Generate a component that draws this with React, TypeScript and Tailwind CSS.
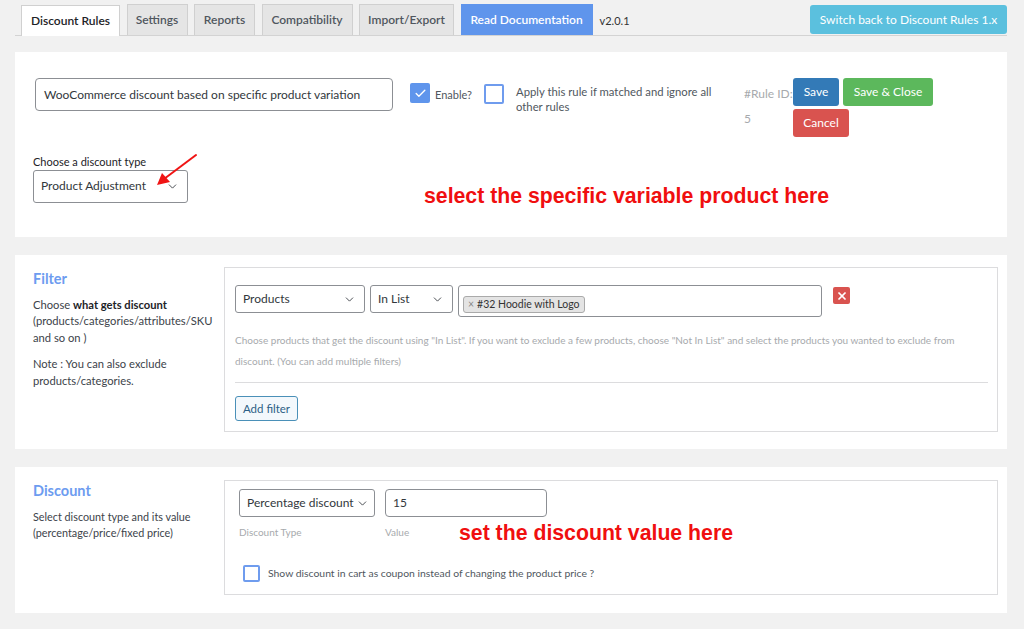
import { ChevronDown, Check, X } from 'lucide-react'

const TABS = [
  { label: 'Discount Rules', w: 'w-[99px]' },
  { label: 'Settings', w: 'w-[61px]' },
  { label: 'Reports', w: 'w-[61px]' },
  { label: 'Compatibility', w: 'w-[91px]' },
  { label: 'Import/Export', w: 'w-[95px]' },
]

function Select({ label, w }: { label: string; w: string }) {
  return (
    <div className={`${w} h-[29px] border border-[#8c8f94] rounded-[3px] bg-white flex items-center justify-between pl-[7px] pr-[8px] text-[12px] text-[#32373c] whitespace-nowrap`}>
      <span>{label}</span>
      <ChevronDown size={13} strokeWidth={1.6} className="shrink-0" />
    </div>
  )
}

export default function App() {
  return (
    <div className="min-h-screen bg-[#f1f1f1] font-['Lato',sans-serif] text-[#3c434a]">
      <div className="mx-[15px] w-[992px] pt-[5px]">
        {/* Tabs */}
        <div className="flex items-end border-b border-[#d3d3d3] pl-[6px] h-[31px]">
          {TABS.map((t, i) => (
            <div
              key={t.label}
              className={`${t.w} h-[31px] mr-[6.5px] flex items-center justify-center border border-b-0 border-[#d0d0d0] text-[12px] font-semibold ${
                i === 0 ? 'bg-white text-[#1d2327] -mb-px' : 'bg-[#e5e5e5] text-[#50575e]'
              }`}
            >
              {t.label}
            </div>
          ))}
          <div className="w-[132px] h-[31px] flex items-center justify-center bg-[#5f95ec] text-white text-[12px] font-semibold">
            Read Documentation
          </div>
          <span className="ml-[7px] mb-[6px] text-[11px] text-[#333]">v2.0.1</span>
          <button className="ml-auto mb-[1px] w-[197px] h-[29px] rounded-[3px] bg-[#5bc0de] text-white text-[12px]">
            Switch back to Discount Rules 1.x
          </button>
        </div>

        {/* Rule header panel */}
        <div className="mt-[16px] bg-white h-[185px] pl-[20px] pt-[26px] relative">
          <div className="flex items-start">
            <div className="w-[358px] h-[33px] border border-[#8c8f94] rounded-[4px] flex items-center px-[8px] text-[12px] text-[#32373c] whitespace-nowrap">
              WooCommerce discount based on specific product variation
            </div>
            <div className="ml-[17px] mt-[5px] w-[20px] h-[20px] rounded-[2px] bg-[#5f95ec] flex items-center justify-center">
              <Check size={13} strokeWidth={2.5} className="text-white" />
            </div>
            <span className="ml-[5px] mt-[9px] w-[49px] text-[11px] text-[#50575e]">Enable?</span>
            <div className="mt-[6px] w-[20px] h-[20px] rounded-[2px] border-2 border-[#6f9cee] bg-white" />
            <span className="ml-[12px] mt-[6px] w-[200px] text-[11.3px] leading-[15px] text-[#50575e]">
              Apply this rule if matched and ignore all other rules
            </span>
            <div className="ml-[28px] mt-[3px] w-[49px] text-[12px] text-[#a7aaad] leading-[25px] whitespace-nowrap">
              <div>#Rule ID:</div>
              <div>5</div>
            </div>
            <div className="flex flex-col gap-[3px]">
              <div className="flex gap-[4px]">
                <button className="w-[46px] h-[28px] rounded-[3px] bg-[#337ab7] text-white text-[12px]">Save</button>
                <button className="w-[90px] h-[28px] rounded-[3px] bg-[#5cb85c] text-white text-[12px]">Save &amp; Close</button>
              </div>
              <button className="w-[56px] h-[28px] rounded-[3px] bg-[#d9534f] text-white text-[12px]">Cancel</button>
            </div>
          </div>

          <div className="mt-[17px] -ml-[2px] text-[11px] text-[#1d2327]">Choose a discount type</div>
          <div className="flex items-start -ml-[2px] -mt-[1px]">
            <Select label="Product Adjustment" w="w-[155px] !h-[33px]" />
            <span className="ml-[236px] mt-[14px] font-['Liberation_Sans',sans-serif] font-bold text-[21.25px] leading-[24px] text-[#f00f0f] whitespace-nowrap">
              select the specific variable product here
            </span>
          </div>

          <svg className="absolute left-[135px] top-[100px]" width="52" height="40" viewBox="0 0 52 40">
            <line x1="46" y1="3" x2="14" y2="27" stroke="#f01414" strokeWidth="2" strokeLinecap="round" />
            <polygon points="7,33 12,21 20,30" fill="#f01414" />
          </svg>
        </div>

        {/* Filter panel */}
        <div className="mt-[18px] bg-white h-[194px] flex pl-[18px] pt-[12px] pr-[9px]">
          <div className="w-[191px] pt-[4px] text-[11.2px] leading-[16.5px] text-[#3c434a]">
            <div className="text-[14.5px] font-bold text-[#6d9cf0] mb-[9px]">Filter</div>
            <p>
              Choose <span className="font-bold text-[#1d2327]">what gets discount</span> (products/categories/attributes/SKU and so on )
            </p>
            <p className="mt-[10px]">Note : You can also exclude products/categories.</p>
          </div>
          <div className="flex-1 h-[165px] border border-[#dcdcde] pl-[10px] pr-[8px] pt-[17px]">
            <div className="flex items-start">
              <Select label="Products" w="w-[130px] !h-[28px]" />
              <div className="ml-[5px]">
                <Select label="In List" w="w-[83px] !h-[28px]" />
              </div>
              <div className="ml-[5px] w-[364px] h-[32px] border border-[#8c8f94] rounded-[3px] pl-[4px] pt-[4px]">
                <span className="inline-flex items-center h-[17px] px-[4px] border border-[#aaa] rounded-[3px] bg-[#e4e4e4] text-[10.5px] text-[#333]">
                  <span className="text-[#888] mr-[3px]">×</span>#32 Hoodie with Logo
                </span>
              </div>
              <div className="ml-[11px] mt-[2px] w-[17px] h-[17px] rounded-[2px] bg-[#d9534f] flex items-center justify-center">
                <X size={12} strokeWidth={3.5} className="text-white" />
              </div>
            </div>
            <p className="mt-[13px] text-[10px] leading-[21px] text-[#a7aaad] pr-[8px]">
              Choose products that get the discount using "In List". If you want to exclude a few products, choose "Not In List" and select the products you wanted to exclude from discount. (You can add multiple filters)
            </p>
            <div className="mt-[10px] border-t border-[#dcdcde] mr-[1px]" />
            <button className="mt-[13px] w-[63px] h-[25px] rounded-[3px] border border-[#4a90b8] bg-[#f3f8fc] text-[#2c5f86] text-[11.5px]">
              Add filter
            </button>
          </div>
        </div>

        {/* Discount panel */}
        <div className="mt-[18px] bg-white h-[146px] flex pl-[18px] pt-[13px] pr-[9px]">
          <div className="w-[191px] pt-[3px] text-[10.8px] leading-[16px] text-[#3c434a]">
            <div className="text-[14.5px] font-bold text-[#6d9cf0] mb-[10px]">Discount</div>
            <p>Select discount type and its value (percentage/price/fixed price)</p>
          </div>
          <div className="flex-1 h-[115px] border border-[#dcdcde] pl-[14px] pt-[8px]">
            <div className="flex">
              <Select label="Percentage discount" w="w-[136px] !pr-[5px] !h-[28px]" />
              <div className="ml-[10px] w-[162px] h-[28px] border border-[#8c8f94] rounded-[4px] flex items-center px-[7px] text-[12px] text-[#32373c]">15</div>
            </div>
            <div className="flex items-start mt-[7px] h-[21px]">
              <span className="w-[146px] text-[10px] text-[#a7aaad] leading-[16px]">Discount Type</span>
              <span className="w-[74px] text-[10px] text-[#a7aaad] leading-[16px]">Value</span>
              <span className="-mt-[3px] font-['Liberation_Sans',sans-serif] font-bold text-[21.25px] leading-[24px] text-[#f00f0f] whitespace-nowrap">
                set the discount value here
              </span>
            </div>
            <div className="flex items-center mt-[20px] ml-[4px]">
              <div className="w-[17px] h-[17px] rounded-[2px] border-2 border-[#6f9cee]" />
              <span className="ml-[8px] text-[10.4px] text-[#50575e]">
                Show discount in cart as coupon instead of changing the product price ?
              </span>
            </div>
          </div>
        </div>
      </div>
    </div>
  )
}
